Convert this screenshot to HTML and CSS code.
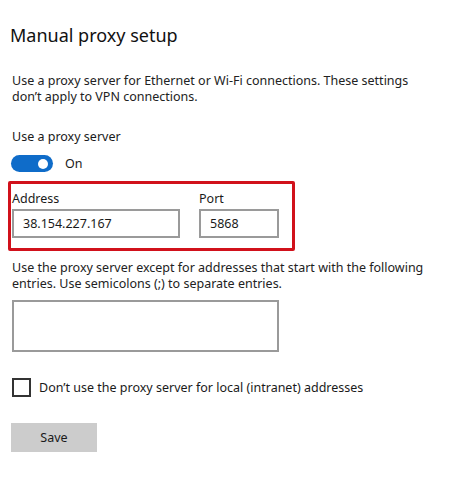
FILE: index.html
```html
<!DOCTYPE html>
<html>
<head>
<meta charset="utf-8">
<link rel="stylesheet" href="styles.css">
</head>
<body>
<main class="page">
  <h1 class="title">Manual proxy setup</h1>
  <p class="desc">Use a proxy server for Ethernet or Wi-Fi connections. These settings don’t apply to VPN connections.</p>
  <div class="label">Use a proxy server</div>
  <div class="toggle-row">
    <span class="toggle"><span class="knob"></span></span>
    <span class="toggle-text">On</span>
  </div>
  <div class="highlight">
    <div class="field field-address">
      <div class="field-label">Address</div>
      <div class="input input-address">38.154.227.167</div>
    </div>
    <div class="field field-port">
      <div class="field-label">Port</div>
      <div class="input input-port">5868</div>
    </div>
  </div>
  <p class="desc desc-except">Use the proxy server except for addresses that start with the following entries. Use semicolons (;) to separate entries.</p>
  <div class="textarea"></div>
  <div class="check-row">
    <span class="checkbox"></span>
    <span class="check-text">Don’t use the proxy server for local (intranet) addresses</span>
  </div>
  <button class="save">Save</button>
</main>
</body>
</html>
```
FILE: styles.css
```css
html, body {
  margin: 0;
  padding: 0;
  background: #ffffff;
}
body {
  font-family: "Noto Sans", "Open Sans", sans-serif;
  color: #1a1a1a;
  font-size: 12.5px;
}
.page {
  display: flex;
  flex-direction: column;
  align-items: flex-start;
  padding: 22px 0 0 12px;
}
.title {
  margin: 0 0 0 -2px;
  font-size: 18px;
  font-weight: 400;
  line-height: 26px;
  color: #111;
}
.desc {
  margin: 25px 0 0 0;
  line-height: 16px;
  width: 410px;
  color: #222;
}
.label {
  margin-top: 23px;
  line-height: 17px;
}
.toggle-row {
  display: flex;
  align-items: center;
  gap: 12px;
  margin-top: 10px;
}
.toggle {
  width: 42px;
  height: 17px;
  border-radius: 9px;
  background: #0f6cc9;
  display: flex;
  align-items: center;
  justify-content: flex-end;
  padding-right: 5px;
  box-sizing: border-box;
  margin-left: -1px;
}
.knob {
  width: 10px;
  height: 10px;
  border-radius: 50%;
  background: #fff;
}
.toggle-text {
  line-height: 17px;
}
.highlight {
  margin: 9px 0 0 -4px;
  width: 287px;
  height: 70px;
  box-sizing: border-box;
  border: 3px solid #d1111b;
  border-radius: 2px;
  display: flex;
  gap: 19px;
  padding: 6px 0 0 1px;
}
.field-label {
  line-height: 17px;
  margin-bottom: 2px;
}
.input {
  height: 29px;
  box-sizing: border-box;
  border: 2px solid #9a9a9a;
  padding: 0 9px;
  display: flex;
  align-items: center;
  color: #1a1a1a;
}
.input-address { width: 168px; }
.input-port { width: 80px; }
.desc-except {
  margin-top: 9px;
  width: 430px;
}
.textarea {
  margin-top: 8px;
  width: 267px;
  height: 52px;
  box-sizing: border-box;
  border: 2px solid #9a9a9a;
}
.check-row {
  display: flex;
  align-items: center;
  gap: 8px;
  margin-top: 26px;
}
.checkbox {
  width: 19px;
  height: 19px;
  box-sizing: border-box;
  border: 2px solid #333;
}
.check-text {
  line-height: 17px;
}
.save {
  margin: 26px 0 0 -1px;
  width: 86px;
  height: 29px;
  border: none;
  background: #cccccc;
  font-family: inherit;
  font-size: 12.5px;
  color: #1a1a1a;
  padding: 0;
}
```
